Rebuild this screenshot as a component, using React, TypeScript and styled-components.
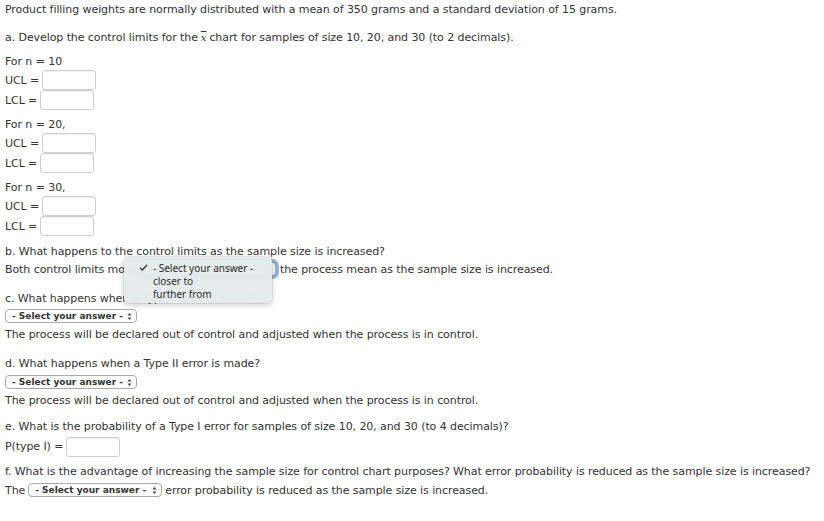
import React from "react";
import styled, { createGlobalStyle } from "styled-components";

const Global = createGlobalStyle`
  body {
    margin: 0;
    background: #ffffff;
  }
`;

const Page = styled.div`
  padding: 0 5px;
  font-family: "DejaVu Sans", Verdana, sans-serif;
  font-size: 11px;
  letter-spacing: -0.08px;
  color: #333333;
`;

const Row = styled.div<{ $mt?: number; $h?: number }>`
  display: flex;
  align-items: center;
  gap: 3px;
  margin-top: ${(p) => p.$mt ?? 0}px;
  height: ${(p) => p.$h ?? 18}px;
  white-space: nowrap;
`;

const Input = styled.input`
  width: 54px;
  height: 20px;
  box-sizing: border-box;
  border: 1px solid #cfcfcf;
  border-radius: 3px;
  box-shadow: inset 0 1px 1px rgba(0, 0, 0, 0.06);
  background: #ffffff;
  margin: 0;
`;

const Select = styled.div<{ $focus?: boolean; $w?: number }>`
  display: inline-flex;
  align-items: center;
  justify-content: space-between;
  box-sizing: border-box;
  width: ${(p) => p.$w ?? 132}px;
  height: 14px;
  padding: 0 4px 0 6px;
  border: 1px solid #a9a9a9;
  border-radius: 4px;
  background: #ffffff;
  font-family: "DejaVu Sans", Verdana, sans-serif;
  font-size: 9px;
  font-weight: bold;
  letter-spacing: 0;
  color: #333333;
  box-shadow: ${(p) => (p.$focus ? "0 0 0 3px #86b3e3" : "none")};
`;

const Arrows = styled.svg`
  width: 5px;
  height: 9px;
  flex: none;
`;

const SelectWrap = styled.span`
  position: relative;
  display: inline-flex;
  margin: 0 1px 0 2px;
`;

const Menu = styled.div`
  position: absolute;
  left: -19px;
  top: -5px;
  width: 148px;
  box-sizing: border-box;
  padding: 4px 0 3px;
  background: rgba(227, 236, 236, 0.98);
  border-radius: 5px;
  box-shadow: 0 2px 6px rgba(0, 0, 0, 0.22), 0 0 0 0.5px rgba(0, 0, 0, 0.12);
  font-family: "Noto Sans", "Liberation Sans", sans-serif;
  font-size: 10px;
  letter-spacing: 0;
  color: #2a2a2a;
  z-index: 2;
`;

const MenuItem = styled.div`
  display: flex;
  align-items: center;
  height: 13px;
  padding-left: 29px;
  position: relative;
`;

const Check = styled.svg`
  position: absolute;
  left: 15px;
  top: 3px;
  width: 9px;
  height: 7px;
`;

const XBar = styled.span`
  font-family: "DejaVu Serif", serif;
  font-style: italic;
  text-decoration: overline;
  font-size: 10px;
`;

const Chooser = ({ focus, w }: { focus?: boolean; w?: number }) => (
  <Select $focus={focus} $w={w}>
    <span>- Select your answer -</span>
    <Arrows viewBox="0 0 5 9">
      <path d="M0.5 3.5 L2.5 1 L4.5 3.5 Z" fill="#444" />
      <path d="M0.5 5.5 L2.5 8 L4.5 5.5 Z" fill="#444" />
    </Arrows>
  </Select>
);

const Limits = ({ n, mt }: { n: string; mt: number }) => (
  <>
    <Row $mt={mt}>For n = {n}</Row>
    <Row $h={20}>
      UCL = <Input />
    </Row>
    <Row $h={20}>
      LCL = <Input />
    </Row>
  </>
);

export default function App() {
  return (
    <Page>
      <Global />
      <Row>
        Product filling weights are normally distributed with a mean of 350 grams and a standard deviation of 15 grams.
      </Row>
      <Row $mt={10}>
        a. Develop the control limits for the <XBar>x</XBar> chart for samples of size 10, 20, and 30 (to 2 decimals).
      </Row>
      <Limits n="10" mt={6} />
      <Limits n="20," mt={5} />
      <Limits n="30," mt={5} />
      <Row $mt={6}>b. What happens to the control limits as the sample size is increased?</Row>
      <Row>
        Both control limits move
        <SelectWrap>
          <Chooser focus w={133} />
          <Menu>
            <MenuItem>
              <Check viewBox="0 0 9 7">
                <path d="M1 3.8 L3.3 6 L8 1" stroke="#333" strokeWidth="1.3" fill="none" />
              </Check>
              - Select your answer -
            </MenuItem>
            <MenuItem>closer to</MenuItem>
            <MenuItem>further from</MenuItem>
          </Menu>
        </SelectWrap>
        the process mean as the sample size is increased.
      </Row>
      <Row $mt={11}>c. What happens when a Type I error is made?</Row>
      <Row>
        <Chooser />
      </Row>
      <Row>The process will be declared out of control and adjusted when the process is in control.</Row>
      <Row $mt={11}>d. What happens when a Type II error is made?</Row>
      <Row $mt={1}>
        <Chooser />
      </Row>
      <Row>The process will be declared out of control and adjusted when the process is in control.</Row>
      <Row $mt={8}>e. What is the probability of a Type I error for samples of size 10, 20, and 30 (to 4 decimals)?</Row>
      <Row $mt={1} $h={21}>
        P(type I) = <Input />
      </Row>
      <Row $mt={5}>
        f. What is the advantage of increasing the sample size for control chart purposes? What error probability is reduced as the sample size is increased?
      </Row>
      <Row $mt={1}>
        The
        <Chooser w={134} />
        error probability is reduced as the sample size is increased.
      </Row>
    </Page>
  );
}
